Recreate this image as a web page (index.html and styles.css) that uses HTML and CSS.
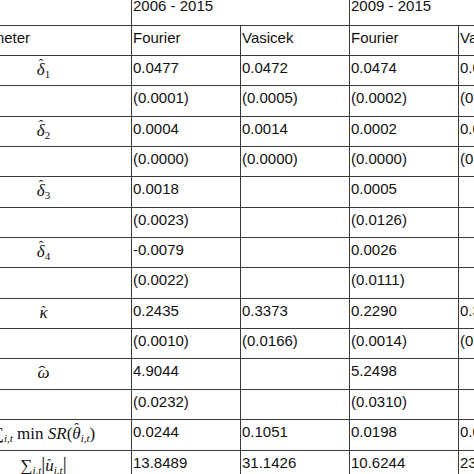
FILE: index.html
```html
<!DOCTYPE html>
<html>
<head>
<meta charset="utf-8">
<link rel="stylesheet" href="styles.css">
</head>
<body>
<table class="results">
  <colgroup>
    <col class="c-param"><col class="c-val"><col class="c-val"><col class="c-val"><col class="c-val">
  </colgroup>
  <tr class="period">
    <td></td>
    <td colspan="2">2006 - 2015</td>
    <td colspan="2">2009 - 2015</td>
  </tr>
  <tr>
    <td class="label">Parameter</td>
    <td>Fourier</td><td>Vasicek</td><td>Fourier</td><td>Vasicek</td>
  </tr>
  <tr>
    <td class="math"><i class="hat">δ</i><sub>1</sub></td>
    <td>0.0477</td><td>0.0472</td><td>0.0474</td><td>0.0470</td>
  </tr>
  <tr>
    <td></td>
    <td>(0.0001)</td><td>(0.0005)</td><td>(0.0002)</td><td>(0.0004)</td>
  </tr>
  <tr>
    <td class="math"><i class="hat">δ</i><sub>2</sub></td>
    <td>0.0004</td><td>0.0014</td><td>0.0002</td><td>0.0011</td>
  </tr>
  <tr>
    <td></td>
    <td>(0.0000)</td><td>(0.0000)</td><td>(0.0000)</td><td>(0.0000)</td>
  </tr>
  <tr>
    <td class="math"><i class="hat">δ</i><sub>3</sub></td>
    <td>0.0018</td><td></td><td>0.0005</td><td></td>
  </tr>
  <tr>
    <td></td>
    <td>(0.0023)</td><td></td><td>(0.0126)</td><td></td>
  </tr>
  <tr>
    <td class="math"><i class="hat">δ</i><sub>4</sub></td>
    <td>-0.0079</td><td></td><td>0.0026</td><td></td>
  </tr>
  <tr>
    <td></td>
    <td>(0.0022)</td><td></td><td>(0.0111)</td><td></td>
  </tr>
  <tr>
    <td class="math"><i class="hat small">κ</i></td>
    <td>0.2435</td><td>0.3373</td><td>0.2290</td><td>0.3108</td>
  </tr>
  <tr>
    <td></td>
    <td>(0.0010)</td><td>(0.0166)</td><td>(0.0014)</td><td>(0.0152)</td>
  </tr>
  <tr>
    <td class="math"><i class="hat wide">ω</i></td>
    <td>4.9044</td><td></td><td>5.2498</td><td></td>
  </tr>
  <tr>
    <td></td>
    <td>(0.0232)</td><td></td><td>(0.0310)</td><td></td>
  </tr>
  <tr>
    <td class="math"><span class="op">∑</span><sub><i>i,t</i></sub> min <i>SR</i>(<i class="hat">θ</i><sub><i>i,t</i></sub>)</td>
    <td>0.0244</td><td>0.1051</td><td>0.0198</td><td>0.0912</td>
  </tr>
  <tr>
    <td class="math"><span class="op">∑</span><sub><i>i,t</i></sub><span class="bar">|</span><i class="hat small">u</i><sub><i>i,t</i></sub><span class="bar">|</span></td>
    <td>13.8489</td><td>31.1426</td><td>10.6244</td><td>23.4871</td>
  </tr>
</table>
</body>
</html>
```

FILE: styles.css
```css
html, body {
  margin: 0;
  padding: 0;
  overflow: hidden;
  background: #ffffff;
}

.results {
  border-collapse: collapse;
  table-layout: fixed;
  width: 612px;
  margin-left: -45px;
  margin-top: -3px;
  font-family: "Liberation Sans", Arial, sans-serif;
  font-size: 15px;
  color: #111;
}

.c-param { width: 176px; }
.c-val { width: 109px; }

.results td {
  border: 1px solid #3a3a3a;
  height: 30.36px;
  padding: 3px 1px 0 1px;
  vertical-align: top;
  line-height: 17px;
  white-space: nowrap;
  box-sizing: border-box;
}

.results tr.period td {
  border-top: none;
  height: 28px;
  padding-top: 0;
}

.results tr.period td:first-child {
  border-left: none;
}

.results td.label {
  padding-left: 4px;
  text-align: left;
}

.results td.math {
  text-align: center;
  font-family: "Liberation Serif", "Times New Roman", serif;
  font-size: 17px;
  padding-top: 5px;
}

.math sub {
  font-size: 11px;
  vertical-align: -3px;
  line-height: 0;
}

.hat {
  position: relative;
  display: inline-block;
}

.hat::before {
  content: "\02C6";
  position: absolute;
  left: 2px;
  top: -5px;
  font-style: normal;
  font-size: 14px;
}

.hat.small::before {
  top: -1px;
  left: 2px;
  font-size: 12px;
}

.hat.wide::before {
  transform: scaleX(1.8);
  transform-origin: center;
  left: 3px;
  top: -1px;
  font-size: 12px;
}

.math .op {
  font-size: 17px;
}

.math .bar {
  font-size: 20px;
}
```
